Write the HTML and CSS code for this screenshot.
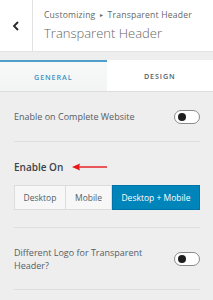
FILE: index.html
```html
<!DOCTYPE html>
<html>
<head>
<meta charset="utf-8">
<link rel="stylesheet" href="styles.css">
</head>
<body>
<div class="panel">
  <header class="head">
    <div class="back">
      <svg width="8" height="10" viewBox="0 0 8 10"><path d="M6 1 L2 5 L6 9" fill="none" stroke="#23282d" stroke-width="1.8"/></svg>
    </div>
    <div class="titles">
      <div class="crumb">Customizing <span class="tri">▸</span> Transparent Header</div>
      <div class="title">Transparent Header</div>
    </div>
  </header>
  <nav class="tabs">
    <div class="tab active">GENERAL</div>
    <div class="tab">DESIGN</div>
  </nav>
  <section class="body">
    <div class="row first">
      <span class="label">Enable on Complete Website</span>
      <span class="toggle"><span class="knob"></span></span>
    </div>
    <div class="sep"></div>
    <div class="enable">
      <span class="heading">Enable On</span>
      <svg class="arrow" width="36" height="8" viewBox="0 0 36 8"><path d="M6 4 H35" stroke="#e8161b" stroke-width="1.4"/><path d="M0 4 L8 0.5 L7 4 L8 7.5 Z" fill="#e8161b"/></svg>
    </div>
    <div class="seg">
      <div class="opt">Desktop</div>
      <div class="opt">Mobile</div>
      <div class="opt on">Desktop + Mobile</div>
    </div>
    <div class="sep"></div>
    <div class="row second">
      <span class="label">Different Logo for Transparent Header?</span>
      <span class="toggle"><span class="knob"></span></span>
    </div>
    <div class="sep"></div>
  </section>
</div>
</body>
</html>
```
FILE: styles.css
```css
html, body { margin: 0; padding: 0; }
body {
  background: #eeeeee;
  font-family: "Open Sans", "Noto Sans", sans-serif;
  width: 213px;
  height: 300px;
  overflow: hidden;
}
.head {
  display: flex;
  background: #fff;
  height: 52px;
  border-bottom: 1px solid #e4e4e4;
  box-sizing: border-box;
}
.back {
  width: 33px;
  border-right: 1px solid #e2e2e2;
  display: flex;
  align-items: center;
  justify-content: center;
  box-sizing: border-box;
}
.titles {
  padding: 9px 0 0 11px;
}
.crumb {
  font-size: 8.6px;
  letter-spacing: 0.2px;
  color: #666;
  line-height: 12px;
  white-space: nowrap;
}
.tri { font-size: 6px; vertical-align: 1px; padding: 0 2px; }
.title {
  font-size: 13px;
  color: #666;
  font-weight: 300;
  line-height: 18px;
  margin-top: 3px;
  white-space: nowrap;
}
.tabs {
  display: flex;
  margin-top: 8px;
  height: 31px;
  background: #fff;
  border-bottom: 1px solid #dddddd;
}
.tab {
  flex: 1;
  display: flex;
  align-items: center;
  justify-content: center;
  font-size: 7.2px;
  font-weight: 600;
  letter-spacing: 0.9px;
  color: #555d66;
  box-sizing: border-box;
}
.tab.active {
  color: #3b93c4;
  border-top: 2px solid #4f9fcc;
  background: linear-gradient(#f7f8f8, #f3f5f5);
}
.body {
  padding: 0 13px 0 14px;
}
.row {
  display: flex;
  justify-content: space-between;
  align-items: center;
}
.row.first { height: 49px; }
.row.second { height: 61px; }
.label {
  font-size: 9px;
  color: #555d66;
  line-height: 13px;
}
.second .label { width: 130px; }
.toggle {
  width: 26px;
  height: 14px;
  border: 1px solid #8a8a8a;
  border-radius: 8px;
  background: #fff;
  box-sizing: border-box;
  display: flex;
  align-items: center;
  padding-left: 3px;
}
.knob {
  width: 8px;
  height: 8px;
  border-radius: 50%;
  background: #1e1e1e;
}
.sep {
  height: 1px;
  background: #dedede;
}
.enable {
  display: flex;
  align-items: center;
  height: 16px;
  margin-top: 17px;
}
.heading {
  font-size: 10px;
  font-weight: 600;
  color: #3c434a;
}
.arrow { margin-left: 9px; }
.seg {
  display: flex;
  margin: 10px 0 17px;
  height: 25px;
  width: 186px;
}
.opt {
  display: flex;
  align-items: center;
  justify-content: center;
  font-size: 8.5px;
  color: #555d66;
  background: #f7f7f7;
  border: 1px solid #dcdcdc;
  box-sizing: border-box;
}
.opt:nth-child(1) { width: 52px; }
.opt:nth-child(2) { width: 46px; border-left: none; }
.opt.on {
  flex: 1;
  background: #0085ba;
  border-color: #0073aa;
  color: #fff;
}
```
